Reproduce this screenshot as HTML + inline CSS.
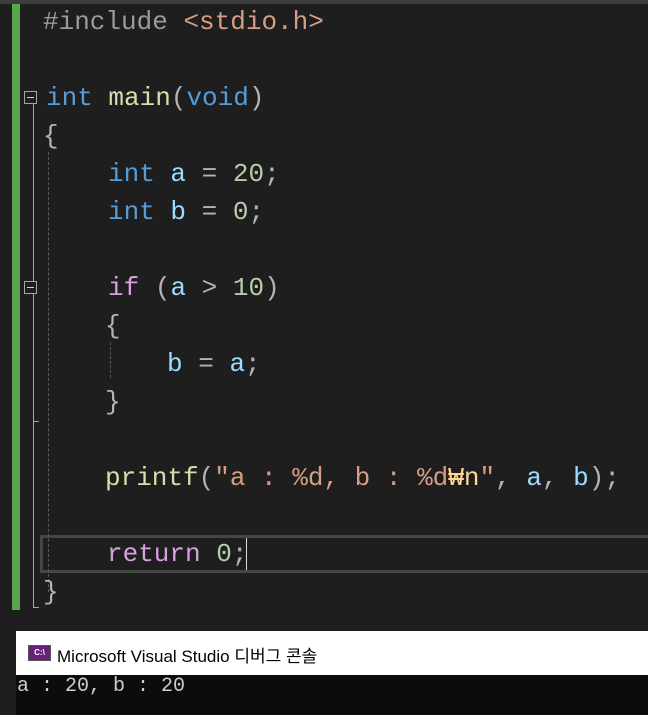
<!DOCTYPE html>
<html><head><meta charset="utf-8"><style>
html,body{margin:0;padding:0;width:648px;height:715px;overflow:hidden;background:#1e1e1e;}
.top{position:absolute;left:0;top:0;width:648px;height:4px;background:#3d3d3d;}
.green{position:absolute;left:12px;top:4px;width:8px;height:606px;background:#57a64a;}
.ln{position:absolute;left:43px;height:38px;line-height:38px;font-family:"Liberation Mono",monospace;font-size:26px;color:#dcdcdc;white-space:pre;}
.k{color:#569cd6}.f{color:#dcdcaa}.v{color:#9cdcfe}.n{color:#b5cea8}.c{color:#d8a0df}.s{color:#d69d85}.p{color:#9b9b9b}.o{color:#b4b4b4}.e{color:#ffd68f}
.fold{position:absolute;left:24px;width:13px;height:13px;border:1px solid #a5a5a5;box-sizing:border-box;}
.fold:after{content:"";position:absolute;left:2px;top:5px;width:7px;height:1px;background:#d0d0d0;}
.vl{position:absolute;width:1px;background:#a5a5a5;}
.dash{position:absolute;width:0;border-left:1px dashed #5a5a5a;}
.cur{position:absolute;left:40px;top:535px;width:620px;height:32px;border:3px solid #464646;border-right:none;}
.title{position:absolute;left:16px;top:631px;width:632px;height:44px;background:#fff;}
.title span{position:absolute;left:41px;top:11px;font-family:"Liberation Sans","Noto Sans CJK KR",sans-serif;font-size:17px;color:#000;}
.icon{position:absolute;left:12px;top:14px;width:23px;height:16px;background:#68217a;border:1px solid #555;box-sizing:border-box;color:#fff;font:bold 8px "Liberation Sans",sans-serif;line-height:14px;text-align:center;}
.con{position:absolute;left:16px;top:675px;width:632px;height:40px;background:#0c0c0c;}
.con span{position:absolute;left:1px;top:0px;font-family:"Liberation Mono",monospace;font-size:20px;color:#cccccc;white-space:pre;}
</style></head><body>
<div class="top"></div>
<div class="green"></div>
<div class="cur"></div>
<div class="fold" style="top:91px"></div>
<div class="vl" style="left:33px;top:104px;height:178px"></div>
<div class="fold" style="top:281px"></div>
<div class="vl" style="left:33px;top:294px;height:314px"></div>
<div class="vl" style="left:33px;top:421px;width:6px;height:1px"></div>
<div class="vl" style="left:33px;top:607px;width:6px;height:1px"></div>
<div class="dash" style="left:48px;top:152px;height:440px"></div>
<div class="dash" style="left:110px;top:342px;height:36px"></div>
<div class="ln" style="top:3px"><span class="p">#include</span> <span class="s">&lt;stdio.h&gt;</span></div>
<div class="ln" style="top:79px;left:46px"><span class="k">int</span> <span class="f">main</span><span class="o">(</span><span class="k">void</span><span class="o">)</span></div>
<div class="ln" style="top:117px"><span class="o">{</span></div>
<div class="ln" style="top:155px;left:108px"><span class="k">int</span> <span class="v">a</span> <span class="o">=</span> <span class="n">20</span><span class="o">;</span></div>
<div class="ln" style="top:193px;left:108px"><span class="k">int</span> <span class="v">b</span> <span class="o">=</span> <span class="n">0</span><span class="o">;</span></div>
<div class="ln" style="top:269px;left:108px"><span class="c">if</span> <span class="o">(</span><span class="v">a</span> <span class="o">&gt;</span> <span class="n">10</span><span class="o">)</span></div>
<div class="ln" style="top:307px;left:105px"><span class="o">{</span></div>
<div class="ln" style="top:345px;left:167px"><span class="v">b</span> <span class="o">=</span> <span class="v">a</span><span class="o">;</span></div>
<div class="ln" style="top:383px;left:105px"><span class="o">}</span></div>
<div class="ln" style="top:459px;left:105px"><span class="f">printf</span><span class="o">(</span><span class="s">"a : %d, b : %d</span><span class="e">₩n</span><span class="s">"</span><span class="o">,</span> <span class="v">a</span><span class="o">,</span> <span class="v">b</span><span class="o">);</span></div>
<div class="ln" style="top:535px;left:107px"><span class="c">return</span> <span class="n">0</span><span class="o">;</span></div>
<div class="vl" style="left:246px;top:538px;height:32px;background:#dcdcdc"></div>
<div class="ln" style="top:573px"><span class="o">}</span></div>
<div class="title"><div class="icon">C:\</div><span>Microsoft Visual Studio 디버그 콘솔</span></div>
<div class="con"><span>a : 20, b : 20</span></div>
</body></html>
